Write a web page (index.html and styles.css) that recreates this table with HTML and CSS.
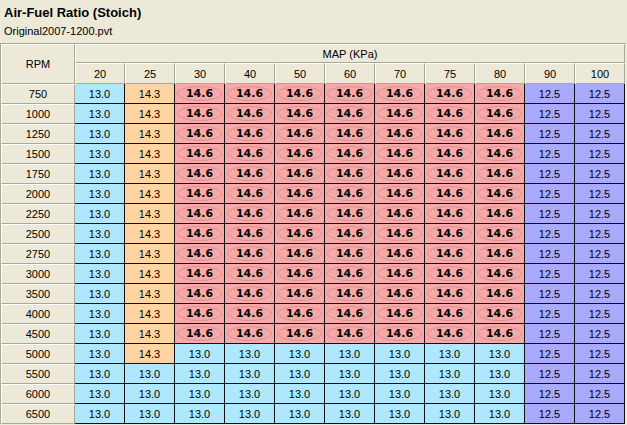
FILE: index.html
```html
<!DOCTYPE html>
<html>
<head>
<meta charset="utf-8">
<title>Air-Fuel Ratio (Stoich)</title>
<link rel="stylesheet" href="styles.css">
</head>
<body>
<div class="title">Air-Fuel Ratio (Stoich)</div>
<div class="file">Original2007-1200.pvt</div>
<div class="grid">
  <div class="hd rpm">RPM</div>
  <div class="hd map">MAP (KPa)</div>
  <div class="hd">20</div><div class="hd">25</div><div class="hd">30</div><div class="hd">40</div><div class="hd">50</div><div class="hd">60</div><div class="hd">70</div><div class="hd">75</div><div class="hd">80</div><div class="hd">90</div><div class="hd">100</div>

  <div class="hd">750</div><div class="c">13.0</div><div class="o">14.3</div><div class="p">14.6</div><div class="p">14.6</div><div class="p">14.6</div><div class="p">14.6</div><div class="p">14.6</div><div class="p">14.6</div><div class="p">14.6</div><div class="b">12.5</div><div class="b">12.5</div>
  <div class="hd">1000</div><div class="c">13.0</div><div class="o">14.3</div><div class="p">14.6</div><div class="p">14.6</div><div class="p">14.6</div><div class="p">14.6</div><div class="p">14.6</div><div class="p">14.6</div><div class="p">14.6</div><div class="b">12.5</div><div class="b">12.5</div>
  <div class="hd">1250</div><div class="c">13.0</div><div class="o">14.3</div><div class="p">14.6</div><div class="p">14.6</div><div class="p">14.6</div><div class="p">14.6</div><div class="p">14.6</div><div class="p">14.6</div><div class="p">14.6</div><div class="b">12.5</div><div class="b">12.5</div>
  <div class="hd">1500</div><div class="c">13.0</div><div class="o">14.3</div><div class="p">14.6</div><div class="p">14.6</div><div class="p">14.6</div><div class="p">14.6</div><div class="p">14.6</div><div class="p">14.6</div><div class="p">14.6</div><div class="b">12.5</div><div class="b">12.5</div>
  <div class="hd">1750</div><div class="c">13.0</div><div class="o">14.3</div><div class="p">14.6</div><div class="p">14.6</div><div class="p">14.6</div><div class="p">14.6</div><div class="p">14.6</div><div class="p">14.6</div><div class="p">14.6</div><div class="b">12.5</div><div class="b">12.5</div>
  <div class="hd">2000</div><div class="c">13.0</div><div class="o">14.3</div><div class="p">14.6</div><div class="p">14.6</div><div class="p">14.6</div><div class="p">14.6</div><div class="p">14.6</div><div class="p">14.6</div><div class="p">14.6</div><div class="b">12.5</div><div class="b">12.5</div>
  <div class="hd">2250</div><div class="c">13.0</div><div class="o">14.3</div><div class="p">14.6</div><div class="p">14.6</div><div class="p">14.6</div><div class="p">14.6</div><div class="p">14.6</div><div class="p">14.6</div><div class="p">14.6</div><div class="b">12.5</div><div class="b">12.5</div>
  <div class="hd">2500</div><div class="c">13.0</div><div class="o">14.3</div><div class="p">14.6</div><div class="p">14.6</div><div class="p">14.6</div><div class="p">14.6</div><div class="p">14.6</div><div class="p">14.6</div><div class="p">14.6</div><div class="b">12.5</div><div class="b">12.5</div>
  <div class="hd">2750</div><div class="c">13.0</div><div class="o">14.3</div><div class="p">14.6</div><div class="p">14.6</div><div class="p">14.6</div><div class="p">14.6</div><div class="p">14.6</div><div class="p">14.6</div><div class="p">14.6</div><div class="b">12.5</div><div class="b">12.5</div>
  <div class="hd">3000</div><div class="c">13.0</div><div class="o">14.3</div><div class="p">14.6</div><div class="p">14.6</div><div class="p">14.6</div><div class="p">14.6</div><div class="p">14.6</div><div class="p">14.6</div><div class="p">14.6</div><div class="b">12.5</div><div class="b">12.5</div>
  <div class="hd">3500</div><div class="c">13.0</div><div class="o">14.3</div><div class="p">14.6</div><div class="p">14.6</div><div class="p">14.6</div><div class="p">14.6</div><div class="p">14.6</div><div class="p">14.6</div><div class="p">14.6</div><div class="b">12.5</div><div class="b">12.5</div>
  <div class="hd">4000</div><div class="c">13.0</div><div class="o">14.3</div><div class="p">14.6</div><div class="p">14.6</div><div class="p">14.6</div><div class="p">14.6</div><div class="p">14.6</div><div class="p">14.6</div><div class="p">14.6</div><div class="b">12.5</div><div class="b">12.5</div>
  <div class="hd">4500</div><div class="c">13.0</div><div class="o">14.3</div><div class="p">14.6</div><div class="p">14.6</div><div class="p">14.6</div><div class="p">14.6</div><div class="p">14.6</div><div class="p">14.6</div><div class="p">14.6</div><div class="b">12.5</div><div class="b">12.5</div>
  <div class="hd">5000</div><div class="c">13.0</div><div class="o">14.3</div><div class="c">13.0</div><div class="c">13.0</div><div class="c">13.0</div><div class="c">13.0</div><div class="c">13.0</div><div class="c">13.0</div><div class="c">13.0</div><div class="b">12.5</div><div class="b">12.5</div>
  <div class="hd">5500</div><div class="c">13.0</div><div class="c">13.0</div><div class="c">13.0</div><div class="c">13.0</div><div class="c">13.0</div><div class="c">13.0</div><div class="c">13.0</div><div class="c">13.0</div><div class="c">13.0</div><div class="b">12.5</div><div class="b">12.5</div>
  <div class="hd">6000</div><div class="c">13.0</div><div class="c">13.0</div><div class="c">13.0</div><div class="c">13.0</div><div class="c">13.0</div><div class="c">13.0</div><div class="c">13.0</div><div class="c">13.0</div><div class="c">13.0</div><div class="b">12.5</div><div class="b">12.5</div>
  <div class="hd">6500</div><div class="c">13.0</div><div class="c">13.0</div><div class="c">13.0</div><div class="c">13.0</div><div class="c">13.0</div><div class="c">13.0</div><div class="c">13.0</div><div class="c">13.0</div><div class="c">13.0</div><div class="b">12.5</div><div class="b">12.5</div>
</div>
</body>
</html>
```
FILE: styles.css
```css
html, body {
  margin: 0;
  padding: 0;
  background: #ECE9D8;
  font-family: "Liberation Sans", Arial, sans-serif;
  color: #000;
}
.title {
  font-size: 13px;
  font-weight: bold;
  line-height: 16px;
  padding: 5px 0 0 4px;
}
.file {
  font-size: 11px;
  line-height: 14px;
  padding: 3px 0 0 4px;
}
.grid {
  margin-top: 5px;
  display: grid;
  grid-template-columns: 74px repeat(11, 50px);
  grid-template-rows: 19px 21px repeat(17, 20px);
  width: 625px;
  border-top: 1px solid #ACA899;
  border-left: 1px solid #ACA899;
  font-size: 11px;
}
.grid > div {
  box-sizing: border-box;
  display: flex;
  align-items: center;
  justify-content: center;
}
.hd {
  background: #ECE9D8;
  border-top: 1px solid #fff;
  border-left: 1px solid #fff;
  border-right: 1px solid #ACA899;
  border-bottom: 1px solid #ACA899;
}
.rpm {
  grid-row: span 2;
}
.map {
  grid-column: span 11;
}
.c, .o, .p, .b {
  border-right: 1px solid #101010;
  border-bottom: 1px solid #101010;
}
.c { background: #AFE8FD; }
.o { background: #FFD4A3; }
.b { background: #AAAAFD; }
.p {
  background: #F5A9A9;
  position: relative;
  font-family: "DejaVu Sans", Verdana, sans-serif;
  font-weight: bold;
  font-size: 11px;
}
.p::before {
  content: "";
  position: absolute;
  left: 2px;
  top: 2px;
  width: 45px;
  height: 15px;
  box-sizing: border-box;
  border-radius: 50%;
  border: 1px solid #E58C8C;
}
```
